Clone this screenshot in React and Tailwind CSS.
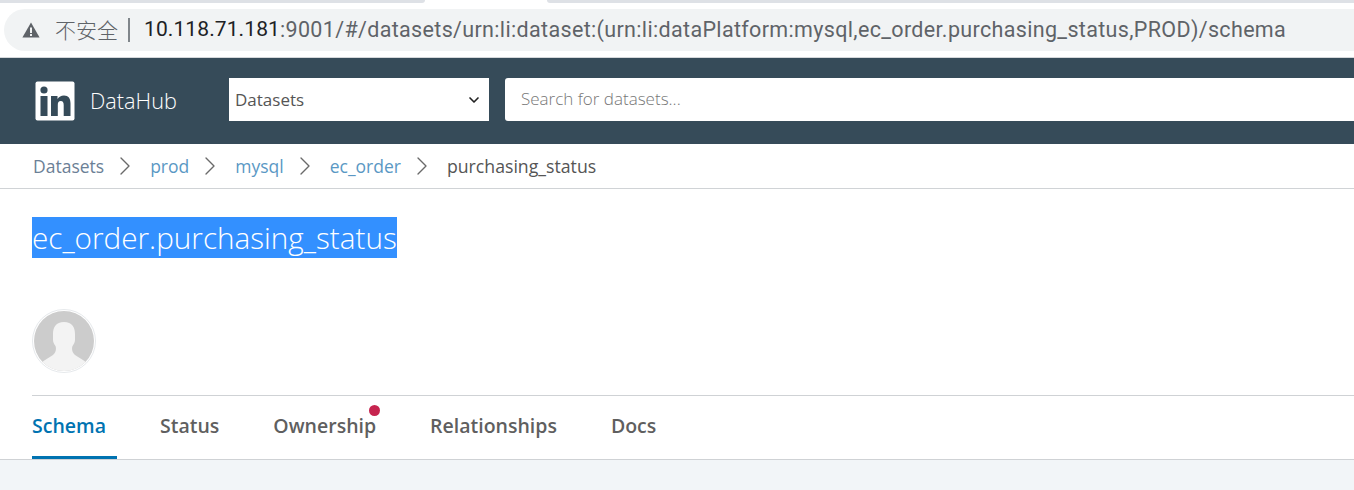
import { ChevronRight, ChevronDown } from "lucide-react";

const crumbs = ["Datasets", "prod", "mysql", "ec_order"];
const tabs = ["Schema", "Status", "Ownership", "Relationships", "Docs"];

function WarnIcon() {
	return (
		<svg width="18" height="16" viewBox="0 0 18 16" className="shrink-0">
			<path d="M9 0.5 L17.6 15.5 L0.4 15.5 Z" fill="#5f6368" />
			<rect x="8" y="5.5" width="2" height="5.5" fill="#f1f3f4" />
			<rect x="8" y="12" width="2" height="2" fill="#f1f3f4" />
		</svg>
	);
}

function Logo() {
	return (
		<svg width="40" height="40" viewBox="0 0 40 40" className="mt-1 shrink-0">
			<rect x="0.5" y="0.5" width="39" height="39" rx="2" fill="#fff" />
			<circle cx="9" cy="9" r="3.6" fill="#364b59" />
			<rect x="5.5" y="15" width="7" height="20" fill="#364b59" />
			<path
				d="M16 15 H22.5 V18 C24 15.8 26 14.6 29 14.6 C33.5 14.6 35.5 17.6 35.5 22.5 V35 H28.7 V24 C28.7 21.5 27.8 20 25.8 20 C23.6 20 22.8 21.6 22.8 24 V35 H16 Z"
				fill="#364b59"
			/>
		</svg>
	);
}

function Avatar() {
	return (
		<svg width="64" height="64" viewBox="0 0 64 64" className="block shrink-0">
			<circle cx="32" cy="32" r="31.5" fill="#fff" stroke="#e6e9ec" />
			<circle cx="32" cy="32" r="30" fill="#cccccc" />
			<clipPath id="avatar-clip">
				<circle cx="32" cy="32" r="30" />
			</clipPath>
			<path
				clipPath="url(#avatar-clip)"
				d="M32 13 C24 13 21 18 21 25 C21 27 21 29 21 31 C21 33 22 35 23.5 37 C24.5 40 24 43 21 46 C17 49 12 51 9 54 L9 64 L55 64 L55 54 C52 51 47 49 43 46 C40 43 39.5 40 40.5 37 C42 35 43 33 43 31 C43 29 43 27 43 25 C43 18 40 13 32 13 Z"
				fill="#f3f3f3"
			/>
		</svg>
	);
}

export default function App() {
	return (
		<div className="h-[490px] w-[1354px] overflow-hidden bg-white font-['Open_Sans',sans-serif]">
			{/* 브라우저 주소창 */}
			<div className="flex h-[3px]">
				<div className="w-[425px] rounded-br-lg bg-[#dee1e6]" />
				<div className="w-[122px]" />
				<div className="flex-1 rounded-bl-lg bg-[#dee1e6]" />
			</div>
			<div className="h-[54px] pt-[6px] pl-1">
				<div className="flex h-[42px] items-center rounded-l-[21px] bg-[#f1f3f4] pl-[18px] font-['Roboto',sans-serif] text-[#5f6368]">
					<WarnIcon />
					<span className="ml-[15px] font-['Noto_Sans_CJK_SC',sans-serif] text-[21px] font-light">
						不安全
					</span>
					<span className="mr-[14px] ml-[10px] h-[24px] w-[2px] bg-[#80868b]" />
					<span className="text-[21px] tracking-[0.1px] text-[#202124]">10.118.71.181</span>
					<span className="text-[21.5px] tracking-[0.34px] whitespace-nowrap">
						:9001/#/datasets/urn:li:dataset:(urn:li:dataPlatform:mysql,ec_order.purchasing_status,PROD)/schema
					</span>
				</div>
			</div>

			{/* 헤더 */}
			<header className="flex h-[87px] items-center border-t border-[#d5d8db] bg-[#364b59] pb-1 pl-[35px]">
				<Logo />
				<span className="mt-[5px] ml-[15px] w-[139px] text-[21.7px] font-light text-white">DataHub</span>
				<div className="flex h-[43px] w-[260px] items-center justify-between bg-white pt-px pr-[7px] pl-[6px] text-[17px] text-[#555]">
					<span>Datasets</span>
					<ChevronDown size={16} strokeWidth={2.5} className="text-[#222]" />
				</div>
				<div className="ml-4 flex h-[43px] flex-1 items-center rounded-l-[3px] bg-white pl-4 text-[17px] font-light text-[#777]">
					Search for datasets...
				</div>
			</header>

			{/* 브레드크럼 */}
			<nav className="flex h-[45px] items-center border-b border-[#d0d3d6] pl-[33px] text-[17.5px] text-[#5a98c4]">
				{crumbs.map((crumb, i) => (
					<div key={crumb} className="flex items-center">
						<span className={i === 0 ? "text-[#6b8096]" : ""}>{crumb}</span>
						<ChevronRight size={32} strokeWidth={1} className="mr-[9px] ml-[5px] text-[#6a6a6a]" />
					</div>
				))}
				<span className="text-[17.7px] text-[#555]">purchasing_status</span>
			</nav>

			{/* 제목 */}
			<div className="pt-7 pl-8">
				<h1 className="inline-block h-[41px] bg-[#3390ff] text-[29.7px] leading-[41px] font-light text-white">
					ec_order.purchasing_status
				</h1>
			</div>
			<div className="mt-[51px] pl-8">
				<Avatar />
			</div>

			{/* 탭 */}
			<div className="mt-[22px] ml-8 flex h-[64px] border-t border-[#cfd2d5] text-[19.5px] font-semibold text-[#5f5f5f]">
				{tabs.map((tab, i) => (
					<div
						key={tab}
						className={
							i === 0
								? "relative mr-[43px] flex w-[85px] items-center border-b-[3px] border-[#0073b1] text-[#0073b1]"
								: "relative mr-[54px] flex items-center border-b-[3px] border-transparent"
						}
					>
						{tab}
						{tab === "Ownership" && (
							<span className="absolute top-[9px] right-[-4px] size-[11px] rounded-full bg-[#c6244f]" />
						)}
					</div>
				))}
			</div>
			<div className="h-[31px] border-t border-[#cfd2d5] bg-[#f2f5f8]" />
		</div>
	);
}
